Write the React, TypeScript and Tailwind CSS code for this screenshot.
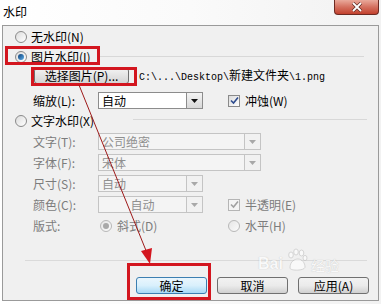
import React from "react";

const F = '"Noto Sans CJK SC", "Liberation Sans", sans-serif';
const MONO = '"Liberation Mono", "Noto Sans CJK SC", monospace';

function Radio({ checked = false, disabled = false }: { checked?: boolean; disabled?: boolean }) {
  return (
    <span
      className={`relative inline-flex h-[12px] w-[12px] shrink-0 items-center justify-center rounded-full border ${
        disabled ? "border-[#b8b8b8] bg-gradient-to-br from-[#e6e6e6] to-[#fbfbfb]" : "border-[#8a8a8a] bg-gradient-to-br from-[#dcdcdc] to-[#ffffff]"
      }`}
    >
      {checked && (
        <span
          className={`h-[6px] w-[6px] rounded-full ${
            disabled ? "bg-[#a9a9a9]" : "bg-gradient-to-br from-[#0b3f78] to-[#5fb0ea]"
          }`}
        />
      )}
    </span>
  );
}

function Check({ disabled = false }: { disabled?: boolean }) {
  return (
    <span
      className={`inline-flex h-[12px] w-[12px] shrink-0 items-center justify-center border ${
        disabled ? "border-[#b5b5b5] bg-[#f4f4f4]" : "border-[#8a8a8a] bg-gradient-to-br from-[#dcdcdc] to-[#ffffff]"
      }`}
    >
      <svg width="9" height="9" viewBox="0 0 9 9">
        <path d="M1 4.5 L3.5 7 L8 1.5" fill="none" stroke={disabled ? "#a0a0a0" : "#2e4c8e"} strokeWidth="1.6" />
      </svg>
    </span>
  );
}

function Combo({
  text,
  width,
  disabled = false,
  center = false,
}: {
  text: string;
  width: string;
  disabled?: boolean;
  center?: boolean;
}) {
  return (
    <div
      className={`flex h-[17px] ${width} items-stretch border ${
        disabled ? "border-[#c4c4c4] bg-[#f4f4f4]" : "border-[#8c8c8c] bg-white"
      }`}
    >
      <div
        className={`flex flex-1 items-center px-[3px] text-[12px] leading-none ${center ? "justify-center" : ""} ${
          disabled ? "text-[#8f8f8f]" : "text-black"
        }`}
      >
        {text}
      </div>
      <div
        className={`flex w-[16px] items-center justify-center border-l ${
          disabled ? "border-[#c4c4c4] bg-[#f1f1f1]" : "border-[#8c8c8c] bg-gradient-to-b from-[#f4f4f4] to-[#d8d8d8]"
        }`}
      >
        <svg width="7" height="4" viewBox="0 0 7 4">
          <path d="M0 0 H7 L3.5 4 Z" fill={disabled ? "#a8a8a8" : "#111"} />
        </svg>
      </div>
    </div>
  );
}

function Btn({ children, def = false }: { children: React.ReactNode; def?: boolean }) {
  return (
    <div
      className={`flex h-[17px] w-[71px] items-center justify-center rounded-[3px] border text-[12px] leading-none text-black ${
        def
          ? "border-[#3c7fb1] bg-gradient-to-b from-[#eaf6fd] via-[#d9f0fc] to-[#a7d9f5]"
          : "border-[#707070] bg-gradient-to-b from-[#f2f2f2] via-[#ebebeb] to-[#d0d0d0]"
      }`}
    >
      {children}
    </div>
  );
}

export default function App() {
  return (
    <div
      className="relative h-[304px] w-[381px] overflow-hidden bg-gradient-to-r from-[#ffffff] via-[#fafafa] to-[#f2f2f2]"
      style={{ fontFamily: F }}
    >
      {/* title bar */}
      <div className="flex h-[25px] items-start justify-between">
        <div className="pl-[3px] pt-[4px] text-[12px] leading-[16px] text-black">水印</div>
        <div className="mr-[2px] flex h-[15px] w-[45px] items-center justify-center rounded-b-[4px] border border-t-0 border-[#6d2a22] bg-gradient-to-b from-[#e9a99b] via-[#d4705f] to-[#c2402d]">
          <svg width="12" height="10" viewBox="0 0 12 10">
            <path d="M2 1 L10 9 M10 1 L2 9" stroke="#5a2a22" strokeWidth="3.2" />
            <path d="M2 1 L10 9 M10 1 L2 9" stroke="#ffffff" strokeWidth="1.8" />
          </svg>
        </div>
      </div>

      {/* panel */}
      <div className="ml-[2px] flex h-[276px] w-[377px] flex-col border border-[#9a9a9a] bg-[#f0f0f0] pl-[12px] text-[12px] text-black">
        <div className="flex h-[22px] items-center gap-[4px]">
          <Radio />
          <span className="leading-none">无水印(N)</span>
        </div>
        <div className="flex h-[17px] items-center gap-[4px]">
          <Radio checked />
          <span className="leading-none">图片水印(I)</span>
          <div className="ml-[5px] mr-[14px] h-px flex-1 bg-[#d8d8d8]" />
        </div>
        <div className="flex h-[22px] items-center pl-[19px]">
          <div className="flex h-[16px] w-[95px] items-center justify-center rounded-[3px] border border-[#707070] bg-gradient-to-b from-[#f2f2f2] to-[#d4d4d4] leading-none">
            选择图片(P)...
          </div>
          <div className="ml-[10px] whitespace-nowrap text-[10px] leading-none" style={{ fontFamily: MONO }}>
            C:\...\Desktop\<span className="text-[12px]" style={{ fontFamily: F }}>新建文件夹</span>\1.png
          </div>
        </div>
        <div className="flex h-[27px] items-center pl-[18px]">
          <span className="w-[65px] leading-none">缩放(L):</span>
          <Combo text="自动" width="w-[105px]" />
          <div className="ml-[25px] flex items-center gap-[5px]">
            <Check />
            <span className="leading-none">冲蚀(W)</span>
          </div>
        </div>
        <div className="flex h-[13px] items-center gap-[4px]">
          <Radio />
          <span className="leading-none">文字水印(X)</span>
          <div className="ml-[35px] mr-[11px] mb-[3px] h-px flex-1 bg-[#d8d8d8]" />
        </div>
        <div className="h-[4px]" />
        <div className="flex h-[21px] items-center pl-[18px] text-[#7c7c7c]">
          <span className="w-[65px] leading-none">文字(T):</span>
          <Combo text="公司绝密" width="w-[163px]" disabled />
        </div>
        <div className="flex h-[21px] items-center pl-[18px] text-[#7c7c7c]">
          <span className="w-[65px] leading-none">字体(F):</span>
          <Combo text="宋体" width="w-[163px]" disabled />
        </div>
        <div className="flex h-[21px] items-center pl-[18px] text-[#7c7c7c]">
          <span className="w-[65px] leading-none">尺寸(S):</span>
          <Combo text="自动" width="w-[105px]" disabled />
        </div>
        <div className="flex h-[21px] items-center pl-[18px] text-[#7c7c7c]">
          <span className="w-[65px] leading-none">颜色(C):</span>
          <Combo text="自动" width="w-[105px]" disabled center />
          <div className="ml-[25px] flex items-center gap-[5px]">
            <Check disabled />
            <span className="leading-none">半透明(E)</span>
          </div>
        </div>
        <div className="flex h-[21px] items-center pl-[18px] text-[#7c7c7c]">
          <span className="w-[67px] leading-none">版式:</span>
          <div className="flex w-[128px] items-center gap-[5px]">
            <Radio checked disabled />
            <span className="leading-none">斜式(D)</span>
          </div>
          <div className="flex items-center gap-[5px]">
            <Radio disabled />
            <span className="leading-none">水平(H)</span>
          </div>
        </div>
        <div className="h-[24px]" />
        <div className="ml-[10px] mr-[11px] h-px bg-[#dadada]" />
        <div className="h-[16px]" />
        <div className="flex items-center justify-end gap-[10px] pr-[9px]">
          <Btn def>确定</Btn>
          <Btn>取消</Btn>
          <Btn>应用(A)</Btn>
        </div>
      </div>

      {/* Baidu watermark */}
      <div className="pointer-events-none absolute left-[258px] top-[248px] flex items-end gap-[2px] text-white opacity-60 [text-shadow:0_0_1px_#9a9a9a]">
        <span className="text-[16px] font-bold leading-none" style={{ fontFamily: '"Liberation Sans", sans-serif' }}>
          Bai
        </span>
        <svg width="24" height="24" viewBox="0 0 24 24">
          <g fill="#ffffff" stroke="#b5b5b5" strokeWidth="0.8">
            <ellipse cx="6" cy="7" rx="2.3" ry="3" />
            <ellipse cx="11" cy="4" rx="2.3" ry="3" />
            <ellipse cx="16.5" cy="5" rx="2.3" ry="3" />
            <ellipse cx="20" cy="10" rx="2" ry="2.6" />
            <path d="M5 20 C5 13 10 11 13 11 C17 11 20 15 20 19 C20 23 5 23 5 20 Z" />
          </g>
        </svg>
        <span className="text-[14px] leading-none">经验</span>
      </div>

      {/* annotation red boxes */}
      <div className="pointer-events-none absolute left-[5px] top-[46px] h-[19px] w-[95px] border-[3px] border-[#d3161f]" />
      <div className="pointer-events-none absolute left-[31px] top-[67px] h-[19px] w-[106px] border-[3px] border-[#d3161f]" />
      <div className="pointer-events-none absolute left-[127px] top-[263px] h-[37px] w-[84px] border-[3px] border-[#d3161f]" />

      {/* annotation arrow */}
      <svg className="pointer-events-none absolute left-0 top-0" width="381" height="304" viewBox="0 0 381 304">
        <line x1="79" y1="85" x2="147" y2="253" stroke="#9e1a1a" strokeWidth="1" />
        <polygon points="150,264 141,251 152,248" fill="#d3161f" />
      </svg>
    </div>
  );
}
